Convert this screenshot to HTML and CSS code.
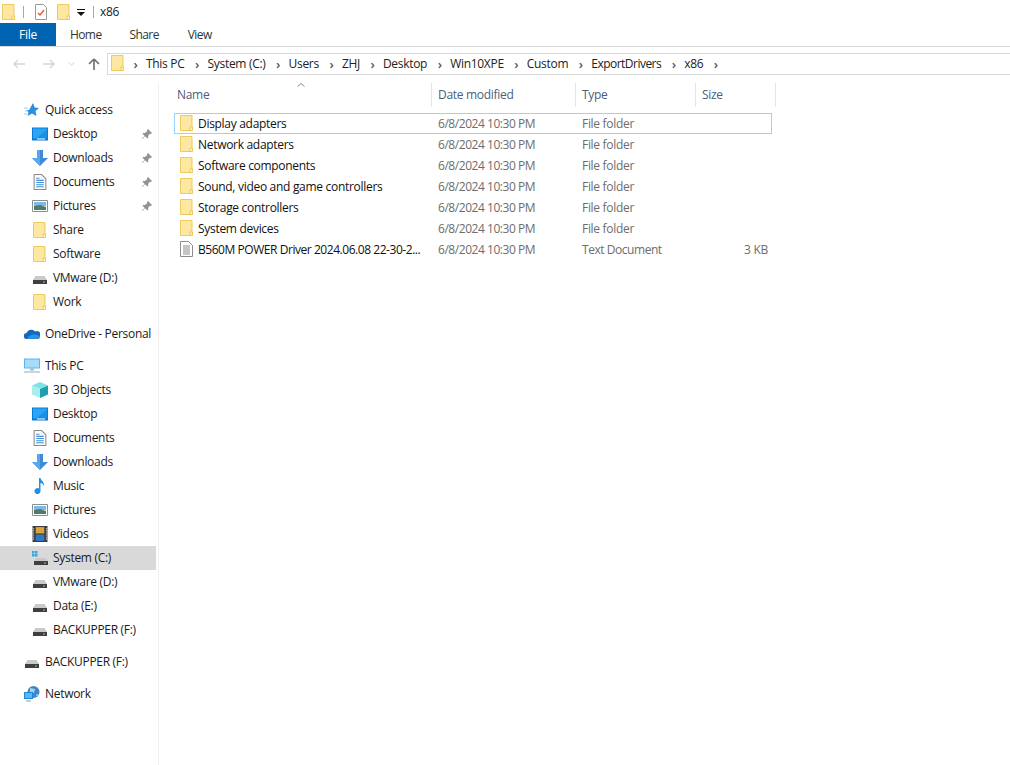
FILE: index.html
```html
<!DOCTYPE html>
<html lang="en">
<head>
<meta charset="utf-8">
<title>x86</title>
<link rel="stylesheet" href="styles.css">
</head>
<body>
<svg class="defs" width="0" height="0">
  <symbol id="folder" viewBox="0 0 13 16"><path d="M.5.5h11.5v15H.5z" fill="#fde38f" stroke="#eecb5e"/><path d="M1 1h10v14H1z" fill="#fee7a0"/><path d="M10 12h2.500v3.500H10z" fill="#fff3c6" stroke="#e7c04d" stroke-width=".8"/></symbol>
  <symbol id="desktop" viewBox="0 0 16 13"><path d="M0 0h16v13H0z" fill="#0a78d6"/><path d="M1 1h14v10H1z" fill="#2aa4f4"/><path d="M15 2v9H4z" fill="#1a8fe8"/><path d="M5 11.500h8" stroke="#fff" stroke-width="1"/></symbol>
  <symbol id="down" viewBox="0 0 16 16"><path d="M5 0h6v8h5l-8 8-8-8h5z" fill="#3d8cd9"/><path d="M5 0h3v16L0 8h5z" fill="#5aa6ea"/></symbol>
  <symbol id="doc" viewBox="0 0 12 15"><path d="M.5.5h7l4 4v10H.5z" fill="#fbfbfb" stroke="#8b8b8b"/><path d="M2.500 6h7M2.500 8h7M2.500 10h7M2.500 12h7M2.500 4h3" stroke="#3f8fdc"/></symbol>
  <symbol id="pic" viewBox="0 0 16 12"><path d="M.5.5h15v11H.5z" fill="#fff" stroke="#8d8d8d"/><path d="M2 2h12v4H2z" fill="#7cb8ea"/><path d="M2 6l6-1 6 2v3H2z" fill="#4f7d6a"/></symbol>
  <symbol id="drive" viewBox="0 0 14 8"><path d="M2.500 0h9L14 4H0z" fill="#c9c9c9"/><path d="M0 4h14v4H0z" fill="#3f3f3f"/><path d="M10 5.500h2v1h-2z" fill="#74d85c"/></symbol>
  <symbol id="pin" viewBox="0 0 10 10"><path d="M6 0l4 4-1 1-1-.300L6 7l.300 1.500-1 1L3 7.300.500 10 0 9.500 2.700 7 .500 4.700l1-1L3 4l2.300-2L5 1z" fill="#8f949b"/></symbol>
</svg>

<header class="titlebar">
  <svg class="qa-folder"><use href="#folder"/></svg>
  <span class="sep"></span>
  <svg class="qa-props" viewBox="0 0 12 16"><path d="M.5.5h8l3 3v12H.5z" fill="#fff" stroke="#9a9a9a"/><path d="M3 9l2 2 4-5" fill="none" stroke="#e8562a" stroke-width="1.300"/></svg>
  <svg class="qa-folder2"><use href="#folder"/></svg>
  <svg class="qa-drop" viewBox="0 0 8 7"><path d="M0 0h8v1H0zM0 3h8L4 7z" fill="#111"/></svg>
  <span class="sep sep2"></span>
  <span class="wintitle">x86</span>
</header>

<nav class="tabs">
  <span class="tab-file">File</span>
  <span class="tab tab-home">Home</span>
  <span class="tab tab-share">Share</span>
  <span class="tab tab-view">View</span>
</nav>

<div class="addressrow">
  <svg class="nav-arrow" viewBox="0 0 12 10"><path d="M5 1L1 5l4 4M1 5h11" fill="none" stroke="#d3d3d3" stroke-width="1.300"/></svg>
  <svg class="nav-arrow fwd" viewBox="0 0 12 10"><path d="M7 1l4 4-4 4M11 5H0" fill="none" stroke="#d3d3d3" stroke-width="1.300"/></svg>
  <svg class="nav-chev" viewBox="0 0 7 4"><path d="M.500.500L3.500 3l3-2.500" fill="none" stroke="#d3d3d3"/></svg>
  <svg class="nav-up" viewBox="0 0 12 12"><path d="M6 1L1 6M6 1l5 5M6 1v11" fill="none" stroke="#6d6d6d" stroke-width="1.600"/></svg>
  <div class="addressbar">
    <svg class="addr-folder"><use href="#folder"/></svg>
    <span class="chev">›</span><span class="crumb">This PC</span>
    <span class="chev">›</span><span class="crumb">System (C:)</span>
    <span class="chev">›</span><span class="crumb">Users</span>
    <span class="chev">›</span><span class="crumb">ZHJ</span>
    <span class="chev">›</span><span class="crumb">Desktop</span>
    <span class="chev">›</span><span class="crumb">Win10XPE</span>
    <span class="chev">›</span><span class="crumb">Custom</span>
    <span class="chev">›</span><span class="crumb crumb-tight">ExportDrivers</span>
    <span class="chev">›</span><span class="crumb">x86</span>
    <span class="chev">›</span>
  </div>
</div>

<main class="body">
  <aside class="sidebar">
    <ul class="group">
      <li class="row top"><svg class="ic16" viewBox="0 0 16 16"><path d="M9 1l1.700 4.500L15 6l-3.500 3 1 5L8 11.500 3.500 14l1-4L2 8h3z" fill="#2b8fe0"/><path d="M0 6h4M1 9h3M0 12h3" stroke="#9fd0f5"/></svg>Quick access</li>
      <li class="row"><svg class="ic16"><use href="#desktop"/></svg><span class="lbl">Desktop</span><svg class="pin"><use href="#pin"/></svg></li>
      <li class="row"><svg class="ic16"><use href="#down"/></svg><span class="lbl">Downloads</span><svg class="pin"><use href="#pin"/></svg></li>
      <li class="row"><svg class="ic16"><use href="#doc"/></svg><span class="lbl">Documents</span><svg class="pin"><use href="#pin"/></svg></li>
      <li class="row"><svg class="ic16"><use href="#pic"/></svg><span class="lbl">Pictures</span><svg class="pin"><use href="#pin"/></svg></li>
      <li class="row"><svg class="ic16 fold"><use href="#folder"/></svg><span class="lbl">Share</span></li>
      <li class="row"><svg class="ic16 fold"><use href="#folder"/></svg><span class="lbl">Software</span></li>
      <li class="row"><svg class="ic16 drv"><use href="#drive"/></svg><span class="lbl">VMware (D:)</span></li>
      <li class="row"><svg class="ic16 fold"><use href="#folder"/></svg><span class="lbl">Work</span></li>
    </ul>
    <ul class="group">
      <li class="row top"><svg class="ic16" viewBox="0 0 16 12"><path d="M3 11a3 3 0 0 1-.5-6A5 5 0 0 1 11 3.500 3.500 3.500 0 0 1 16 8a3 3 0 0 1-3 3z" fill="#0f6cbd"/><path d="M3 11h10a3 3 0 0 0 3-3l-6-2-5 2z" fill="#2f8fe0"/></svg>OneDrive - Personal</li>
    </ul>
    <ul class="group">
      <li class="row top"><svg class="ic16" viewBox="0 0 16 15"><path d="M0 0h16v10H0z" fill="#5bb4ec"/><path d="M1 1h14v8H1z" fill="#a6dcfb"/><path d="M6 10h4v2H6z" fill="#9db8ca"/><path d="M0 13.500h16" stroke="#98a9b5"/></svg>This PC</li>
      <li class="row"><svg class="ic16" viewBox="0 0 16 16"><path d="M8 0l8 3.500-8 3.500-8-3.500z" fill="#7fe3e6"/><path d="M0 3.500L8 7v9l-8-3.500z" fill="#a8eef0"/><path d="M16 3.500L8 7v9l8-3.500z" fill="#1e9eae"/></svg><span class="lbl">3D Objects</span></li>
      <li class="row"><svg class="ic16"><use href="#desktop"/></svg><span class="lbl">Desktop</span></li>
      <li class="row"><svg class="ic16"><use href="#doc"/></svg><span class="lbl">Documents</span></li>
      <li class="row"><svg class="ic16"><use href="#down"/></svg><span class="lbl">Downloads</span></li>
      <li class="row"><svg class="ic16" viewBox="0 0 16 16"><path d="M7 0h1.500c.5 3 4 3.500 3.500 8-.8-2-2.200-3-3.500-3v8a3 3 0 1 1-1.500-2.500z" fill="#1d92e6"/></svg><span class="lbl">Music</span></li>
      <li class="row"><svg class="ic16"><use href="#pic"/></svg><span class="lbl">Pictures</span></li>
      <li class="row"><svg class="ic16" viewBox="0 0 14 15"><path d="M0 0h14v15H0z" fill="#3b3b3b"/><path d="M3 1h8v6H3z" fill="#d9a63a"/><path d="M3 8h8v6H3z" fill="#2f78c4"/><path d="M1 2v11M13 2v11" stroke="#ddd" stroke-dasharray="1 1"/></svg><span class="lbl">Videos</span></li>
      <li class="row selected"><svg class="ic16" viewBox="0 0 16 14"><path d="M0 0h2.500v2.500H0zM3 0h2.500v2.500H3zM0 3h2.500v2.500H0zM3 3h2.500v2.500H3z" fill="#2fa8e8"/><path d="M4.500 7h9L16 10H2z" fill="#c9c9c9"/><path d="M2 10h14v4H2z" fill="#3f3f3f"/><path d="M12 11.500h2v1h-2z" fill="#74d85c"/></svg><span class="lbl">System (C:)</span></li>
      <li class="row"><svg class="ic16 drv"><use href="#drive"/></svg><span class="lbl">VMware (D:)</span></li>
      <li class="row"><svg class="ic16 drv"><use href="#drive"/></svg><span class="lbl">Data (E:)</span></li>
      <li class="row"><svg class="ic16 drv"><use href="#drive"/></svg><span class="lbl">BACKUPPER (F:)</span></li>
    </ul>
    <ul class="group">
      <li class="row top"><svg class="ic16 drv"><use href="#drive"/></svg>BACKUPPER (F:)</li>
    </ul>
    <ul class="group">
      <li class="row top"><svg class="ic16" viewBox="0 0 16 16"><circle cx="9.500" cy="6" r="6" fill="#3f86c9"/><path d="M6 2l5 1-1 4-4-1zM12 8l3 1-2 2z" fill="#a9cfe9"/><path d="M0 6h9v7H0z" fill="#1e88d8"/><path d="M1 7h7v5H1z" fill="#5bb6f0"/><path d="M2 15h5" stroke="#7f9fb5"/></svg>Network</li>
    </ul>
  </aside>

  <section class="files">
    <svg class="sort" viewBox="0 0 8 4"><path d="M.500 3.500L4 .500l3.500 3" fill="none" stroke="#8a8a8a"/></svg>
    <div class="head">
      <span class="col-name hd">Name</span>
      <span class="col-date hd">Date modified</span>
      <span class="col-type hd">Type</span>
      <span class="col-size hd">Size</span>
    </div>
    <div class="list">
      <div class="file focused"><span class="f-name"><svg class="f-ic"><use href="#folder"/></svg>Display adapters</span><span class="f-date">6/8/2024 10:30 PM</span><span class="f-type">File folder</span><span class="f-size"></span></div>
      <div class="file"><span class="f-name"><svg class="f-ic"><use href="#folder"/></svg>Network adapters</span><span class="f-date">6/8/2024 10:30 PM</span><span class="f-type">File folder</span><span class="f-size"></span></div>
      <div class="file"><span class="f-name"><svg class="f-ic"><use href="#folder"/></svg>Software components</span><span class="f-date">6/8/2024 10:30 PM</span><span class="f-type">File folder</span><span class="f-size"></span></div>
      <div class="file"><span class="f-name"><svg class="f-ic"><use href="#folder"/></svg>Sound, video and game controllers</span><span class="f-date">6/8/2024 10:30 PM</span><span class="f-type">File folder</span><span class="f-size"></span></div>
      <div class="file"><span class="f-name"><svg class="f-ic"><use href="#folder"/></svg>Storage controllers</span><span class="f-date">6/8/2024 10:30 PM</span><span class="f-type">File folder</span><span class="f-size"></span></div>
      <div class="file"><span class="f-name"><svg class="f-ic"><use href="#folder"/></svg>System devices</span><span class="f-date">6/8/2024 10:30 PM</span><span class="f-type">File folder</span><span class="f-size"></span></div>
      <div class="file"><span class="f-name f-long"><svg class="f-ic" viewBox="0 0 13 16"><path d="M.5.500h8l4 4v11H.5z" fill="#fff" stroke="#8c8c8c"/><path d="M3 5h7M3 7h7M3 9h7M3 11h7M3 13h7" stroke="#8c8c8c"/></svg>B560M POWER Driver 2024.06.08 22-30-2...</span><span class="f-date">6/8/2024 10:30 PM</span><span class="f-type f-text">Text Document</span><span class="f-size">3 KB</span></div>
    </div>
  </section>
</main>
</body>
</html>
```

FILE: styles.css
```css
* { box-sizing: border-box; }
html, body { margin: 0; height: 100%; overflow: hidden; }
body {
  width: 1010px;
  height: 765px;
  background: #fff;
  color: #1a1a1a;
  font-family: "Open Sans", "Noto Sans", sans-serif;
  font-size: 12px;
  letter-spacing: -0.3px;
  display: flex;
  flex-direction: column;
}
.defs { position: absolute; }
svg { display: block; flex: none; }

.titlebar { height: 23px; display: flex; align-items: center; padding-left: 2px; }
.qa-folder { width: 13px; height: 16px; }
.sep { width: 1px; height: 12px; background: #a8a8a8; margin-left: 8px; }
.qa-props { width: 12px; height: 16px; margin-left: 11px; }
.qa-folder2 { width: 13px; height: 16px; margin-left: 10px; }
.qa-drop { width: 8px; height: 7px; margin-left: 7px; margin-top: 2px; }
.sep2 { margin-left: 8px; }
.wintitle { margin-left: 6px; }

.tabs { height: 24px; display: flex; align-items: center; border-bottom: 1px solid #dadbdc; }
.tab-file { width: 56px; height: 23px; background: #0063b1; color: #fff; display: flex; align-items: center; justify-content: center; }
.tab { color: #333; letter-spacing: -0.6px; }
.tab-home { margin-left: 14px; }
.tab-share { margin-left: 28px; }
.tab-view { margin-left: 29px; }

.addressrow { height: 36px; padding: 6px 0 8px; display: flex; align-items: center; }
.nav-arrow { width: 12px; height: 10px; margin-left: 13px; }
.fwd { margin-left: 18px; }
.nav-chev { width: 7px; height: 4px; margin-left: 13px; }
.nav-up { width: 12px; height: 12px; margin-left: 13px; }
.addressbar {
  margin-left: 7px;
  width: 904px;
  height: 22px;
  border: 1px solid #d9d9d9;
  border-right: 0;
  display: flex;
  align-items: center;
  padding: 0 0 1px 3px;
  color: #222;
}
.addr-folder { width: 13px; height: 16px; margin: -1px 7px 0 0; }
.chev { width: 9px; color: #555; font-size: 13px; font-weight: 600; text-align: center; margin-right: 6px; }
.crumb { margin-right: 8px; }
.crumb-tight { letter-spacing: -0.52px; }

.body { flex: 1; display: flex; min-height: 0; }
.sidebar { width: 159px; border-right: 1px solid #f0f0f0; padding-top: 15px; }
.group { list-style: none; margin: 0 0 8px; padding: 0; }
.row { height: 24px; width: 156px; display: flex; align-items: center; padding: 0 0 1px 32px; white-space: nowrap; color: #1a1a1a; }
.row.top { padding-left: 24px; }
.row.selected { background: #d9d9d9; }
.ic16 { width: 16px; height: 16px; margin: 1px 5px 0 0; }
.ic16.fold { width: 13px; margin: 1px 7px 0 1px; }
.ic16.drv { height: 8px; margin-top: 5px; }
.lbl { flex: 1; }
.pin { width: 10px; height: 10px; margin: 1px 4px 0 0; }

.files { flex: 1; position: relative; padding: 0 0 0 15px; }
.sort { position: absolute; left: 138px; top: 0; width: 8px; height: 4px; }
.head { display: flex; height: 24px; align-items: center; }
.hd { color: #4c607a; height: 24px; line-height: 23px; border-right: 1px solid #e5e5e5; padding-left: 3px; }
.col-name { width: 258px; }
.hd.col-date { width: 144px; padding-left: 6px; }
.hd.col-type { width: 120px; padding-left: 6px; }
.hd.col-size { width: 80px; padding-left: 6px; }

.list { margin-top: 6px; width: 598px; }
.file { height: 21px; display: flex; align-items: center; border: 1px solid transparent; width: 598px; }
.file.focused { border-color: #99d1ff; }
.f-name { width: 263px; display: flex; align-items: center; color: #111; padding-left: 5px; white-space: nowrap; }
.f-long { letter-spacing: -0.45px; }
.f-ic { width: 13px; height: 16px; margin: -1px 5px 0 0; }
.f-date { width: 144px; color: #6d6d6d; letter-spacing: -0.45px; }
.f-type { width: 120px; color: #6d6d6d; }
.f-text { letter-spacing: -0.45px; }
.f-size { width: 66px; color: #6d6d6d; text-align: right; }
```
